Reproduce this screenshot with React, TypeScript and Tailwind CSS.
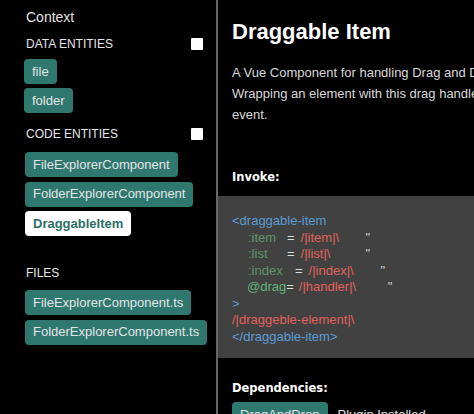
import type { FC } from 'react';

const Tag: FC<{ label: string; active?: boolean }> = ({ label, active }) => (
    <div
        className={`h-[25px] px-2 rounded-[4px] flex items-center text-[13px] whitespace-nowrap self-start ${
            active ? 'bg-white text-[#2c6f68] font-bold' : 'bg-[#2f7870] text-[#e4e4e4]'
        }`}
    >
        {label}
    </div>
);

const SectionHeader: FC<{ title: string; checkbox?: boolean }> = ({ title, checkbox }) => (
    <div className="h-[20px] flex items-center justify-between pr-[13px]">
        <span className="ml-[1px] text-[12px] text-[#e6e6e6]">{title}</span>
        {checkbox && <span className="w-[12px] h-[12px] bg-white rounded-[1px]"></span>}
    </div>
);

const attrs = [
    { name: ':item', value: '/|item|\\', nameW: 'w-[39px]', valML: 'ml-[6px]', valW: 'w-[65px]', color: 'text-[#5f9468]' },
    { name: ':list', value: '/|list|\\', nameW: 'w-[39px]', valML: 'ml-[6px]', valW: 'w-[65px]', color: 'text-[#5f9468]' },
    { name: ':index', value: '/|index|\\', nameW: 'w-[47px]', valML: 'ml-[6px]', valW: 'w-[72px]', color: 'text-[#5f9468]' },
    { name: '@drag', value: '/|handler|\\', nameW: '-ml-[1px]', valML: 'ml-[5px]', valW: 'w-[89px]', color: 'text-[#62b478]' },
];

export default function App() {
    return (
        <div className="w-[474px] h-[414px] bg-black overflow-hidden flex font-['Liberation_Sans',Arial,sans-serif]">
            {/* Sidebar */}
            <aside className="w-[216px] shrink-0 flex flex-col pl-[25px] pt-[8px]">
                <div className="h-[18px] leading-[18px] text-[14px] text-[#e2e2e2] ml-[1px]">Context</div>

                <div className="mt-[8px]">
                    <SectionHeader title="DATA ENTITIES" checkbox />
                </div>
                <div className="mt-[5px] flex flex-col gap-[4px] -ml-[1px]">
                    <Tag label="file" />
                    <Tag label="folder" />
                </div>

                <div className="mt-[11px]">
                    <SectionHeader title="CODE ENTITIES" checkbox />
                </div>
                <div className="mt-[8px] flex flex-col gap-[4.5px]">
                    <Tag label="FileExplorerComponent" />
                    <Tag label="FolderExplorerComponent" />
                    <Tag label="DraggableItem" active />
                </div>

                <div className="mt-[27px]">
                    <SectionHeader title="FILES" />
                </div>
                <div className="mt-[7px] flex flex-col gap-[4.5px]">
                    <Tag label="FileExplorerComponent.ts" />
                    <Tag label="FolderExplorerComponent.ts" />
                </div>
            </aside>

            <div className="w-[2px] shrink-0 bg-[#666]"></div>

            {/* Main */}
            <main className="flex-1 min-w-0 flex flex-col pt-[19px] whitespace-nowrap">
                <h1 className="pl-[14px] text-[22px] leading-[25px] font-bold text-white">Draggable Item</h1>
                <p className="pl-[14px] mt-[18px] text-[13px] leading-[21px] text-[#d8d8d8]">
                    A Vue Component for handling Drag and Drop interactions.
                    <br />
                    Wrapping an element with this drag handler will emit a drag
                    <br />
                    event.
                </p>

                <div className="pl-[14px] mt-[45px] font-['DejaVu_Sans',sans-serif] font-bold text-[11.5px] leading-[14px] text-white">
                    Invoke:
                </div>

                <div className="mt-[12px] bg-[#414141] pl-[14px] pt-[17px] pb-[13px] text-[13px] leading-[16.5px]">
                    <div className="text-[#5b9bd3]">&lt;draggable-item</div>
                    {attrs.map((a) => (
                        <div key={a.name} className="pl-[16px] flex">
                            <span className={`inline-block ${a.nameW} ${a.color}`}>{a.name}</span>
                            <span className="text-[#dddddd]">=</span>
                            <span className={`inline-block ${a.valML} ${a.valW} text-[#e0625a]`}>{a.value}</span>
                            <span className="text-[#cfcfcf]">"</span>
                        </div>
                    ))}
                    <div className="text-[#5b9bd3]">&gt;</div>
                    <div className="text-[#e0625a]">/|draggeble-element|\</div>
                    <div className="text-[#5b9bd3]">&lt;/draggable-item&gt;</div>
                </div>

                <div className="pl-[14px] mt-[23px] font-['DejaVu_Sans',sans-serif] font-bold text-[11.5px] leading-[14px] text-white">
                    Dependencies:
                </div>
                <div className="pl-[14px] mt-[7px] flex items-center">
                    <Tag label="DragAndDrop" />
                    <span className="ml-[10px] text-[13px] text-[#e0e0e0]">Plugin Installed</span>
                </div>
            </main>
        </div>
    );
}
